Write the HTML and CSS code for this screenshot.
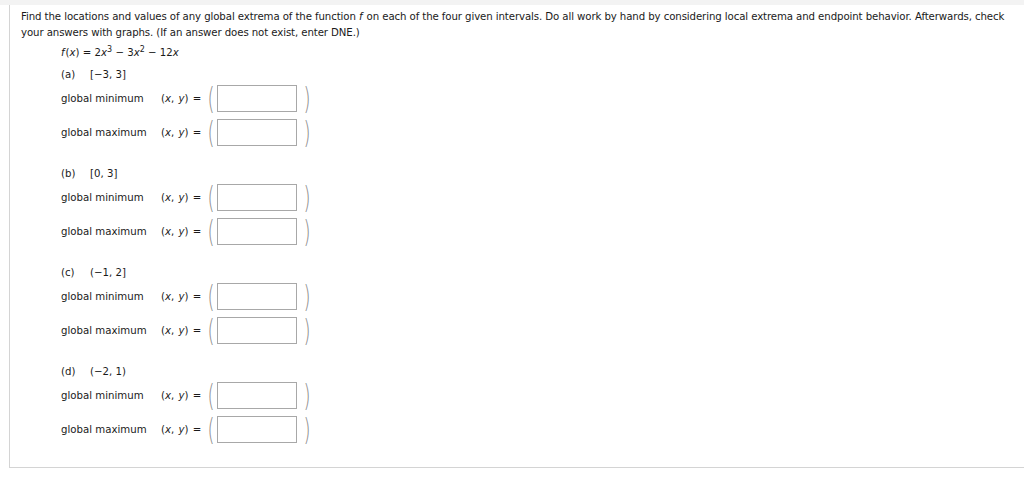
FILE: index.html
```html
<!DOCTYPE html>
<html>
<head>
<meta charset="utf-8">
<link rel="stylesheet" href="styles.css">
</head>
<body>
<div class="topbar"></div>
<div class="panel">
  <p class="intro">Find the locations and values of any global extrema of the function <i class="fn">f</i> on each of the four given intervals. Do all work by hand by considering local extrema and endpoint behavior. Afterwards, check your answers with graphs. (If an answer does not exist, enter DNE.)</p>
  <div class="body">
    <div class="func"><i class="fn">f</i>(<i>x</i>) = 2<i>x</i><sup>3</sup> &minus; 3<i>x</i><sup>2</sup> &minus; 12<i>x</i></div>

    <div class="part">
      <div class="head"><span class="tag">(a)</span>[&minus;3, 3]</div>
      <div class="row"><span class="lbl">global minimum</span><span class="xy">(<i>x</i>, <i>y</i>) =</span><span class="par">(</span><span class="box"></span><span class="par">)</span></div>
      <div class="row"><span class="lbl">global maximum</span><span class="xy">(<i>x</i>, <i>y</i>) =</span><span class="par">(</span><span class="box"></span><span class="par">)</span></div>
    </div>

    <div class="part">
      <div class="head"><span class="tag">(b)</span>[0, 3]</div>
      <div class="row"><span class="lbl">global minimum</span><span class="xy">(<i>x</i>, <i>y</i>) =</span><span class="par">(</span><span class="box"></span><span class="par">)</span></div>
      <div class="row"><span class="lbl">global maximum</span><span class="xy">(<i>x</i>, <i>y</i>) =</span><span class="par">(</span><span class="box"></span><span class="par">)</span></div>
    </div>

    <div class="part">
      <div class="head"><span class="tag">(c)</span>(&minus;1, 2]</div>
      <div class="row"><span class="lbl">global minimum</span><span class="xy">(<i>x</i>, <i>y</i>) =</span><span class="par">(</span><span class="box"></span><span class="par">)</span></div>
      <div class="row"><span class="lbl">global maximum</span><span class="xy">(<i>x</i>, <i>y</i>) =</span><span class="par">(</span><span class="box"></span><span class="par">)</span></div>
    </div>

    <div class="part last">
      <div class="head"><span class="tag">(d)</span>(&minus;2, 1)</div>
      <div class="row"><span class="lbl">global minimum</span><span class="xy">(<i>x</i>, <i>y</i>) =</span><span class="par">(</span><span class="box"></span><span class="par">)</span></div>
      <div class="row"><span class="lbl">global maximum</span><span class="xy">(<i>x</i>, <i>y</i>) =</span><span class="par">(</span><span class="box"></span><span class="par">)</span></div>
    </div>
  </div>
</div>
</body>
</html>
```
FILE: styles.css
```css
html, body {
  margin: 0;
  padding: 0;
  background: #ffffff;
}
body {
  font-family: "DejaVu Sans", Verdana, sans-serif;
  font-size: 10.2px;
  color: #1a1a1a;
}
.topbar {
  height: 5px;
  background: #f3f3f3;
}
.panel {
  margin-left: 9px;
  border-left: 1px solid #d4d4d4;
  border-bottom: 1px solid #d4d4d4;
  padding: 4px 10px 24px 11px;
}
.intro {
  margin: 0;
  line-height: 16px;
  letter-spacing: -0.1px;
}
.fn {
  padding-right: 1px;
}
.body {
  padding-left: 40px;
}
.func {
  margin-top: 4px;
  line-height: 16px;
}
sup {
  font-size: 8px;
  line-height: 0;
  vertical-align: 4px;
}
.part {
  margin-top: 6px;
}
.part + .part {
  margin-top: 20px;
}
.head {
  line-height: 16px;
  height: 16px;
  display: flex;
}
.tag {
  width: 29px;
}
.row {
  display: flex;
  align-items: center;
  height: 27px;
  margin-top: 2px;
}
.row + .row {
  margin-top: 7px;
}
.lbl {
  width: 100px;
}
.xy {
  width: 45px;
  word-spacing: 1px;
}
.par {
  font-family: "DejaVu Sans", sans-serif;
  font-weight: 200;
  font-size: 30px;
  line-height: 27px;
  color: #8a8a8a;
  transform: scaleX(0.6);
  width: 8px;
  text-align: center;
}
.box {
  width: 78px;
  height: 25px;
  border: 1px solid #a8a8a8;
  background: #fff;
  margin: 0 5px 0 3px;
}
```
